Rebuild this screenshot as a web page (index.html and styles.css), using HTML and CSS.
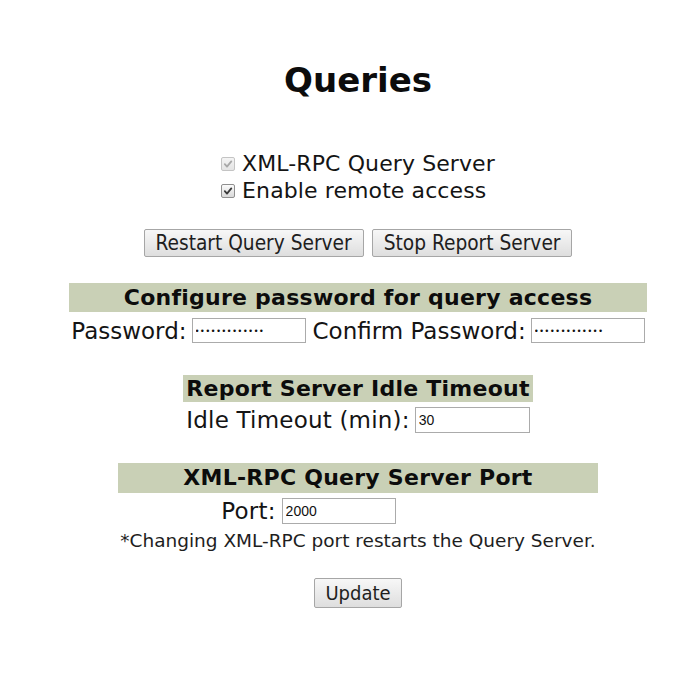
FILE: index.html
```html
<!DOCTYPE html>
<html>
<head>
<meta charset="utf-8">
<link rel="stylesheet" href="styles.css">
</head>
<body>
<main class="page">
  <h1 class="title">Queries</h1>

  <div class="checks">
    <label class="check check-disabled">
      <span class="box"><svg viewBox="0 0 10 10" width="10" height="10"><path d="M1.8 5.2 L4 7.6 L8.3 2.4" fill="none" stroke="currentColor" stroke-width="1.8" stroke-linecap="round" stroke-linejoin="round"/></svg></span>
      <span>XML-RPC Query Server</span>
    </label>
    <label class="check">
      <span class="box"><svg viewBox="0 0 10 10" width="10" height="10"><path d="M1.8 5.2 L4 7.6 L8.3 2.4" fill="none" stroke="currentColor" stroke-width="1.8" stroke-linecap="round" stroke-linejoin="round"/></svg></span>
      <span>Enable remote access</span>
    </label>
  </div>

  <div class="actions">
    <button class="btn">Restart Query Server</button>
    <button class="btn">Stop Report Server</button>
  </div>

  <section class="block block-pass">
    <div class="bar">Configure password for query access</div>
    <div class="row">
      <span class="lbl">Password:</span>
      <input class="field field-pass" type="password" value="tiptopsecret1">
      <span class="lbl lbl-gap">Confirm Password:</span>
      <input class="field field-pass" type="password" value="tiptopsecret1">
    </div>
  </section>

  <section class="block block-idle">
    <div class="bar">Report Server Idle Timeout</div>
    <div class="row">
      <span class="lbl">Idle Timeout (min):</span>
      <input class="field" type="text" value="30">
    </div>
  </section>

  <section class="block block-port">
    <div class="bar bar-tall">XML-RPC Query Server Port</div>
    <div class="row row-port">
      <span class="lbl">Port:</span>
      <input class="field" type="text" value="2000">
    </div>
    <div class="note">*Changing XML-RPC port restarts the Query Server.</div>
  </section>

  <div class="actions actions-update">
    <button class="btn btn-update">Update</button>
  </div>
</main>
</body>
</html>
```

FILE: styles.css
```css
html, body {
  margin: 0;
  padding: 0;
  background: #ffffff;
}

.page {
  width: 688px;
  height: 685px;
  box-sizing: border-box;
  padding: 0 0 0 28px;
  display: flex;
  flex-direction: column;
  align-items: center;
  font-family: "DejaVu Sans", Verdana, sans-serif;
  font-size: 22px;
  color: #141414;
}

.title {
  margin: 60px 0 0 0;
  font-size: 34px;
  font-weight: bold;
  line-height: 40px;
  color: #0c0c0c;
}

.checks {
  margin-top: 50px;
  display: flex;
  flex-direction: column;
  align-items: flex-start;
  line-height: 27px;
  letter-spacing: 0.1px;
}

.check {
  display: flex;
  align-items: center;
  gap: 7px;
}

.box {
  width: 14px;
  height: 14px;
  box-sizing: border-box;
  border: 1px solid #8f8f8f;
  border-radius: 2px;
  background: linear-gradient(#fbfbfb, #d9d9d9);
  display: flex;
  align-items: center;
  justify-content: center;
  color: #3a3a3a;
  margin-top: 1px;
}

.check-disabled .box {
  border-color: #c4c4c4;
  background: linear-gradient(#f4f4f4, #e4e4e4);
  color: #a8a8a8;
}

.actions {
  margin-top: 25px;
  display: flex;
  gap: 8px;
}

.btn {
  font-family: "DejaVu Sans Condensed", "DejaVu Sans", sans-serif;
  font-size: 20.7px;
  height: 28px;
  padding: 0 11px;
  border: 1px solid #a6a6a6;
  border-radius: 2px;
  background: linear-gradient(#f7f7f7, #dedede);
  color: #1e1e1e;
  line-height: 26px;
}

.btn-update {
  height: 30px;
  font-size: 20px;
  padding: 0 10px;
}

.block {
  display: flex;
  flex-direction: column;
  align-items: stretch;
}

.block-pass { margin-top: 26px; }
.block-idle { margin-top: 32px; }
.block-port { margin-top: 30px; }

.bar {
  background: #c9d0b6;
  font-weight: bold;
  text-align: center;
  height: 29px;
  line-height: 29px;
  font-size: 22px;
  letter-spacing: 0.25px;
  color: #0c0c0c;
  padding: 0 3px;
}

.block-pass .bar {
  margin: 0 -2px;
}

.block-idle .bar {
  height: 27px;
  line-height: 27px;
}

.bar-tall {
  height: 30px;
  line-height: 30px;
  margin: 0 -2px;
}

.row {
  display: flex;
  justify-content: center;
  align-items: center;
  gap: 5px;
  margin-top: 5px;
  height: 26px;
}

.block-pass .row {
  margin-top: 6px;
  height: 25px;
}

.row-port {
  justify-content: flex-start;
  padding-left: 101px;
  gap: 6px;
}

.lbl {
  font-size: 23px;
  letter-spacing: 0.2px;
}

.block-pass .lbl {
  letter-spacing: 0;
}

.lbl-gap { margin-left: 2px; }

.field {
  width: 114px;
  height: 26px;
  box-sizing: border-box;
  border: 1px solid #ababab;
  padding: 0 3px;
  font-family: "Liberation Sans", Arial, sans-serif;
  font-size: 14px;
  color: #111;
  margin: 0;
}

.field-pass {
  height: 25px;
  font-size: 9px;
  letter-spacing: 2.2px;
}

.block-idle .field {
  width: 115px;
}

.note {
  margin-top: 5px;
  font-size: 18.5px;
  line-height: 24px;
  text-align: center;
  color: #1e1e1e;
}

.actions-update {
  margin-top: 25px;
}
```
